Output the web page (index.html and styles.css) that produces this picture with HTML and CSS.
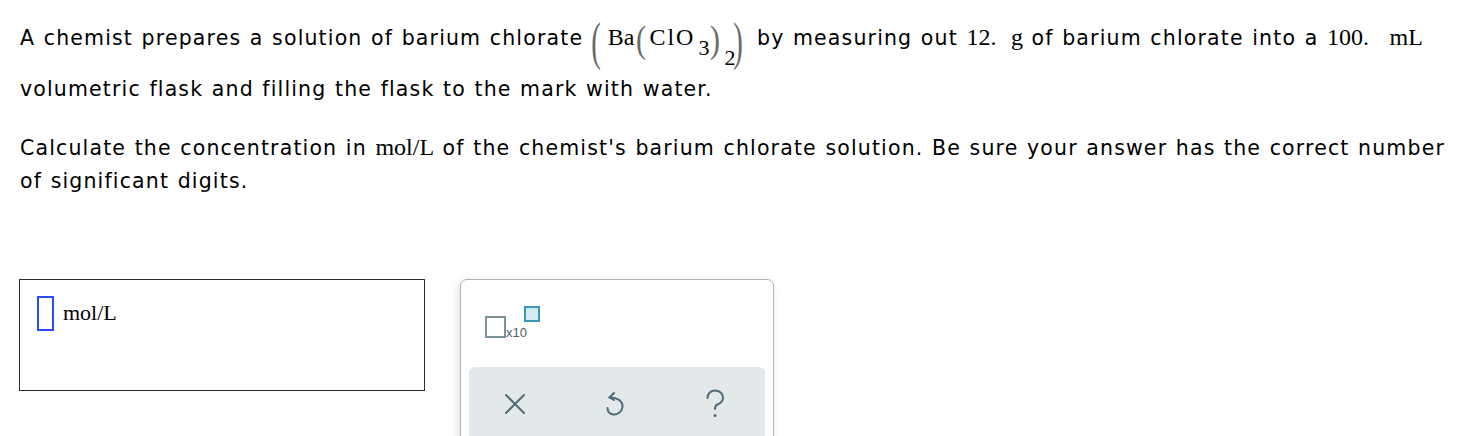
FILE: index.html
```html
<!DOCTYPE html>
<html>
<head>
<meta charset="utf-8">
<link rel="stylesheet" href="styles.css">
</head>
<body>
<div class="page">
  <p class="intro">A chemist prepares a solution of barium chlorate <span class="math formula"><span class="paren big open">(</span><span class="mi">Ba</span><span class="paren mid open">(</span><span class="mi clo">ClO</span><span class="sub3">3</span><span class="paren mid close">)</span><span class="sub2">2</span><span class="paren big close">)</span></span> by measuring out <span class="math num">12.</span> <span class="math unit-g">g</span> of barium chlorate into a <span class="math num">100.</span> <span class="math unit-ml">mL</span><br>volumetric flask and filling the flask to the mark with water.</p>
  <p class="question">Calculate the concentration in <span class="math">mol/L</span> of the chemist's barium chlorate solution. Be sure your answer has the correct number of significant digits.</p>
  <div class="answer-row">
    <div class="answer-box">
      <span class="cursor-box"></span><span class="unit">mol/L</span>
    </div>
    <div class="keypad">
      <div class="keypad-top">
        <div class="sci">
          <span class="sci-base"></span><span class="sci-x">x10</span><span class="sci-exp"></span>
        </div>
      </div>
      <div class="keypad-bar">
        <svg class="icon" width="22" height="22" viewBox="0 0 22 22"><path d="M2 2 L20 20 M20 2 L2 20" stroke="#4e6b77" stroke-width="2" stroke-linecap="round" fill="none"/></svg>
        <svg class="icon undo" width="22" height="26" viewBox="0 0 22 26"><path d="M10 2 L5.5 6.5 L10 9" stroke="#4e6b77" stroke-width="2" stroke-linecap="round" stroke-linejoin="round" fill="none"/><path d="M5.5 6.5 C 13 6, 19 10, 18.5 16 C 18 21, 13 24, 9.5 23.5 C 6 23, 3.5 20.5, 3.5 17" stroke="#4e6b77" stroke-width="2" stroke-linecap="round" fill="none"/></svg>
        <svg class="icon q" width="22" height="30" viewBox="0 0 22 30"><path d="M3.5 9 C 3.5 4.5, 7 1.5, 11 1.5 C 15.5 1.5, 19 4.5, 19 8.5 C 19 12.5, 16 14.5, 13.5 15.5 C 11.5 16.3, 11 17.5, 11 20" stroke="#4e6b77" stroke-width="2" stroke-linecap="round" fill="none"/><circle cx="11" cy="26.5" r="1.5" fill="#4e6b77"/></svg>
      </div>
    </div>
  </div>
</div>
</body>
</html>
```

FILE: styles.css
```css
html, body {
  margin: 0;
  padding: 0;
  background: #ffffff;
}
.page {
  padding: 12px 0 0 20px;
  font-family: "DejaVu Sans", Verdana, sans-serif;
  font-size: 20.5px;
  letter-spacing: 1.15px;
  word-spacing: 0.9px;
  color: #000;
}
p {
  margin: 0;
}
.intro {
  line-height: 51px;
}
.question {
  margin-top: 16px;
  line-height: 33px;
  width: 1450px;
}
.math {
  font-family: "Liberation Serif", "Times New Roman", serif;
  font-size: 24px;
  letter-spacing: 0;
  word-spacing: 0;
}
.unit-g {
  margin-left: 6px;
}
.unit-ml {
  margin-left: 12px;
}
.formula {
  display: inline-block;
  line-height: 20px;
  padding: 0 6px 0 0;
  margin-left: -3px;
}
.clo {
  letter-spacing: 2px;
}
.paren {
  display: inline-block;
  color: #6a6a6a;
}
.paren.big {
  transform: translateY(4px) scale(1.2, 2.2);
  transform-origin: 50% 50%;
}
.paren.big.open {
  margin: 0 8px 0 3px;
}
.paren.big.close {
  margin: 0 0 0 -1px;
}
.paren.mid {
  transform: translateY(3px) scale(1.25, 1.55);
  transform-origin: 50% 50%;
}
.paren.mid.open {
  margin: 0 4px 0 3px;
}
.paren.mid.close {
  margin: 0 0 0 2px;
}
.sub3 {
  display: inline-block;
  position: relative;
  top: 10px;
  font-size: 22px;
  margin-left: 3px;
}
.sub2 {
  display: inline-block;
  position: relative;
  top: 20px;
  font-size: 22px;
  margin-left: 5px;
}
.answer-row {
  display: flex;
  gap: 35px;
  margin-top: 81px;
  margin-left: -1px;
  letter-spacing: 0;
  word-spacing: 0;
}
.answer-box {
  width: 404px;
  height: 110px;
  border: 1px solid #2b2b2b;
  display: flex;
  align-items: flex-start;
  box-sizing: content-box;
}
.cursor-box {
  display: inline-block;
  width: 13px;
  height: 31px;
  border: 2px solid #2c4bff;
  margin: 16px 0 0 17px;
}
.unit {
  font-family: "Liberation Serif", "Times New Roman", serif;
  font-size: 22px;
  margin: 20px 0 0 9px;
}
.keypad {
  width: 314px;
  height: 180px;
  border: 1px solid #a9b5bb;
  border-radius: 7px;
  box-shadow: -2px 2px 8px rgba(0, 0, 0, 0.12);
  box-sizing: border-box;
  padding: 0 8px;
  font-family: "Liberation Sans", Arial, sans-serif;
}
.keypad-top {
  height: 87px;
  padding: 26px 0 0 16px;
  box-sizing: border-box;
}
.sci {
  position: relative;
  width: 60px;
  height: 40px;
}
.sci-base {
  position: absolute;
  left: 0;
  top: 10px;
  width: 17px;
  height: 18px;
  border: 2px solid #7d939c;
}
.sci-x {
  position: absolute;
  left: 21px;
  top: 19px;
  font-size: 13px;
  color: #4d5f67;
}
.sci-exp {
  position: absolute;
  left: 39px;
  top: 0;
  width: 12px;
  height: 12px;
  border: 2px solid #3b99b4;
  background: #d3ebf2;
}
.keypad-bar {
  height: 80px;
  background: #e3e8eb;
  border-radius: 6px;
  display: flex;
  gap: 78px;
  align-items: flex-start;
  padding: 26px 0 0 35px;
  box-sizing: border-box;
}
.icon {
  display: block;
}
.icon.undo {
  margin-top: -2px;
}
.icon.q {
  margin-top: -4px;
}
```
